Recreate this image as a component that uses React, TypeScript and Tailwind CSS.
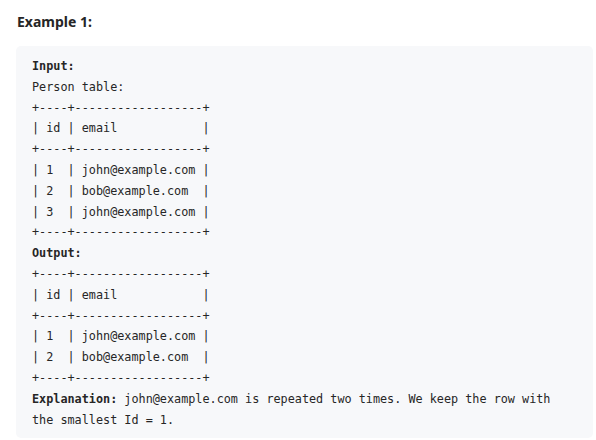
const mono = { fontFamily: '"DejaVu Sans Mono", "Liberation Mono", monospace' };

const lines: { label?: string; text?: string }[] = [
  { label: "Input:" },
  { text: "Person table:" },
  { text: "+----+------------------+" },
  { text: "| id | email            |" },
  { text: "+----+------------------+" },
  { text: "| 1  | john@example.com |" },
  { text: "| 2  | bob@example.com  |" },
  { text: "| 3  | john@example.com |" },
  { text: "+----+------------------+" },
  { label: "Output:" },
  { text: "+----+------------------+" },
  { text: "| id | email            |" },
  { text: "+----+------------------+" },
  { text: "| 1  | john@example.com |" },
  { text: "| 2  | bob@example.com  |" },
  { text: "+----+------------------+" },
  { label: "Explanation:", text: " john@example.com is repeated two times. We keep the row with" },
  { text: "the smallest Id = 1." },
];

export default function App() {
  return (
    <div className="w-[596px] h-[440px] bg-white overflow-hidden pl-4 pr-[3px]">
      <h3 className="pt-[12px] h-[46px] text-[14px] font-bold text-[#262626] font-['Noto_Sans',sans-serif] leading-[20px] pl-px">
        Example 1:
      </h3>
      <div className="bg-[#f7f8fa] rounded-[5px] pl-4 pr-4 pt-[10px] pb-[8px]">
        <pre className="text-[11.8px] leading-[20.8px] text-[#262626] whitespace-pre" style={mono}>
          {lines.map((l, i) => (
            <div key={i}>
              {l.label && <span className="font-bold">{l.label}</span>}
              {l.text}
            </div>
          ))}
        </pre>
      </div>
    </div>
  );
}
